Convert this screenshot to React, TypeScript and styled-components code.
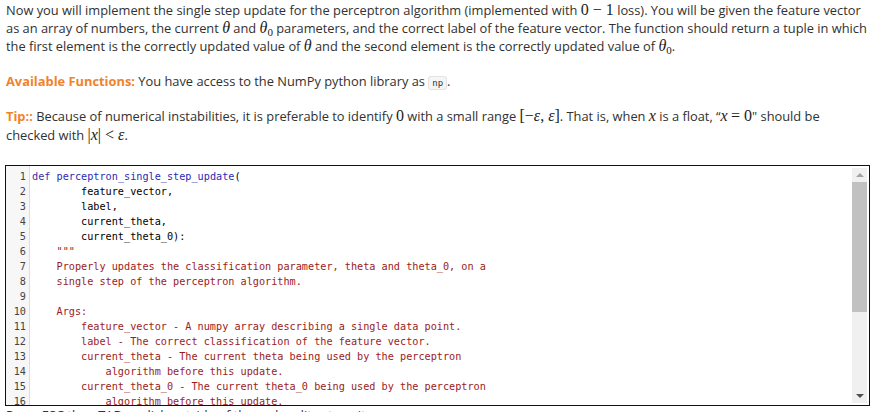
import * as React from 'react';
import styled, { createGlobalStyle } from 'styled-components';

const GlobalStyle = createGlobalStyle`
  html, body {
    margin: 0;
    padding: 0;
    background: #fff;
  }
  body {
    font-family: 'Open Sans', 'Noto Sans', sans-serif;
    font-size: 12.85px;
    color: #313131;
  }
`;

const Page = styled.div`
  padding: 1px 6px 0 6px;
`;

const Para = styled.p<{ $last?: boolean }>`
  margin: 0 0 ${(p) => (p.$last ? '0' : '17px')} 0;
  line-height: ${(p) => (p.$last ? '19px' : '18px')};
  max-width: ${(p) => (p.$last ? '836px' : '868px')};
`;

const Label = styled.strong`
  color: #f0832b;
  font-weight: 700;
`;

const Math = styled.span<{ $italic?: boolean }>`
  font-family: 'Liberation Serif', 'DejaVu Serif', serif;
  font-size: 16px;
  line-height: 0;
  font-style: ${(p) => (p.$italic ? 'italic' : 'normal')};
  color: #222;
`;

const Sub = styled.sub`
  font-size: 11px;
  font-style: normal;
  line-height: 0;
  vertical-align: -3px;
`;

const Code = styled.code`
  font-family: 'DejaVu Sans Mono', monospace;
  font-size: 9px;
  line-height: 0;
  background: #f5f5f5;
  border: 1px solid #e3e3e3;
  border-radius: 3px;
  padding: 1px 3px;
  color: #333;
`;

const Editor = styled.div`
  display: flex;
  margin: 20px -1px 0 -1px;
  width: 863px;
  height: 239px;
  border: 1px solid #111;
  overflow: hidden;
  background: #fff;
`;

const Gutter = styled.div`
  width: 23px;
  flex: none;
  background: #f7f7f7;
  border-right: 1px solid #ddd;
  padding-top: 3px;
  font-family: 'DejaVu Sans Mono', monospace;
  font-size: 10.2px;
  line-height: 15px;
  text-align: right;
`;

const LineNo = styled.div`
  padding-right: 3px;
  color: #444;
`;

const Lines = styled.div`
  flex: 1;
  padding: 3px 0 0 2px;
  font-family: 'DejaVu Sans Mono', monospace;
  font-size: 10.2px;
  line-height: 15px;
  white-space: pre;
  color: #000;
`;

const Tok = styled.span<{ $kind?: 'kw' | 'def' | 'str' }>`
  color: ${(p) =>
    p.$kind === 'kw' ? '#3a2fa0' : p.$kind === 'def' ? '#2b2bb5' : p.$kind === 'str' ? '#9b1c1c' : '#000'};
`;

const Scrollbar = styled.div`
  width: 15px;
  flex: none;
  margin: 2px 2px 2px 0;
  background: #f0f0f0;
  display: flex;
  flex-direction: column;
  align-items: center;
`;

const Arrow = styled.div<{ $up?: boolean }>`
  height: 14px;
  flex: none;
  display: flex;
  align-items: center;
  justify-content: center;
  &::after {
    content: '';
    border-left: 4px solid transparent;
    border-right: 4px solid transparent;
    ${(p) => (p.$up ? 'border-bottom: 4px solid #a3a3a3;' : 'border-top: 4px solid #505050;')}
  }
`;

const Thumb = styled.div`
  width: 15px;
  height: 130px;
  background: #c1c1c1;
`;

const Spacer = styled.div`
  flex: 1;
`;

const Hint = styled.div`
  line-height: 18px;
  color: #313131;
`;

type Piece = [string, 'kw' | 'def' | 'str' | undefined];

const code: Piece[][] = [
  [['def', 'kw'], [' ', undefined], ['perceptron_single_step_update', 'def'], ['(', undefined]],
  [['        feature_vector,', undefined]],
  [['        label,', undefined]],
  [['        current_theta,', undefined]],
  [['        current_theta_0):', undefined]],
  [['    """', 'str']],
  [['    Properly updates the classification parameter, theta and theta_0, on a', 'str']],
  [['    single step of the perceptron algorithm.', 'str']],
  [[' ', undefined]],
  [['    Args:', 'str']],
  [['        feature_vector - A numpy array describing a single data point.', 'str']],
  [['        label - The correct classification of the feature vector.', 'str']],
  [['        current_theta - The current theta being used by the perceptron', 'str']],
  [['            algorithm before this update.', 'str']],
  [['        current_theta_0 - The current theta_0 being used by the perceptron', 'str']],
  [['            algorithm before this update.', 'str']],
];

const Theta = ({ sub }: { sub?: boolean }) => (
  <Math $italic>
    θ{sub && <Sub>0</Sub>}
  </Math>
);

export default function App() {
  return (
    <Page>
      <GlobalStyle />
      <Para>
        Now you will implement the single step update for the perceptron algorithm (implemented with{' '}
        <Math>0 − 1</Math> loss). You will be given the feature vector as an array of numbers, the current{' '}
        <Theta /> and <Theta sub /> parameters, and the correct label of the feature vector. The function should
        return a tuple in which the first element is the correctly updated value of <Theta /> and the second element
        is the correctly updated value of <Theta sub />.
      </Para>
      <Para>
        <Label>Available Functions:</Label> You have access to the NumPy python library as <Code>np</Code>.
      </Para>
      <Para $last>
        <Label>Tip::</Label> Because of numerical instabilities, it is preferable to identify <Math>0</Math> with a
        small range <Math>[−<Math $italic>ε</Math>, <Math $italic>ε</Math>]</Math>. That is, when{' '}
        <Math $italic>x</Math> is a float, “<Math $italic>x</Math> <Math>= 0</Math>" should be checked with{' '}
        <Math>
          |<Math $italic>x</Math>| &lt; <Math $italic>ε</Math>
        </Math>
        .
      </Para>
      <Editor>
        <Gutter>
          {code.map((_, i) => (
            <LineNo key={i}>{i + 1}</LineNo>
          ))}
        </Gutter>
        <Lines>
          {code.map((line, i) => (
            <div key={i}>
              {line.map(([text, kind], j) => (
                <Tok key={j} $kind={kind}>
                  {text}
                </Tok>
              ))}
            </div>
          ))}
        </Lines>
        <Scrollbar>
          <Arrow $up />
          <Thumb />
          <Spacer />
          <Arrow />
        </Scrollbar>
      </Editor>
      <Hint>Press ESC then TAB or click outside of the code editor to exit</Hint>
    </Page>
  );
}
